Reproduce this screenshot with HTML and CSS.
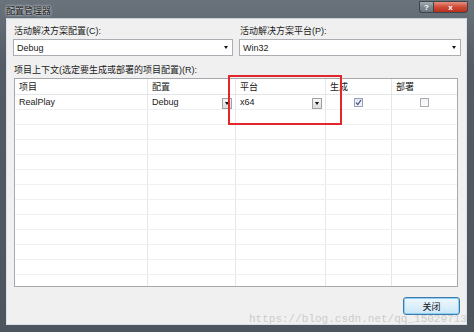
FILE: index.html
```html
<!DOCTYPE html>
<html lang="zh-CN">
<head>
    <meta charset="UTF-8">
    <meta name="viewport" content="width=device-width, initial-scale=1.0">
    <title>配置管理器</title>
    <link rel="stylesheet" href="styles.css">
</head>
<body>
<div class="window">
    <div class="titlebar">
        <span class="title">配置管理器</span>
        <div class="caption-btns">
            <span class="cap-btn help">?</span>
            <span class="cap-btn close">x</span>
        </div>
    </div>

    <div class="client">
        <div class="fields">
            <div class="field">
                <label>活动解决方案配置(C):</label>
                <div class="combo"><span>Debug</span><span class="arrow"></span></div>
            </div>
            <div class="field">
                <label>活动解决方案平台(P):</label>
                <div class="combo"><span>Win32</span><span class="arrow"></span></div>
            </div>
        </div>

        <div class="ctx-label">项目上下文(选定要生成或部署的项目配置)(R):</div>

        <div class="grid">
            <div class="row head">
                <div class="cell">项目</div>
                <div class="cell">配置</div>
                <div class="cell">平台</div>
                <div class="cell">生成</div>
                <div class="cell">部署</div>
            </div>
            <div class="row">
                <div class="cell">RealPlay</div>
                <div class="cell drop">Debug<span class="cell-btn"><span class="arrow"></span></span></div>
                <div class="cell drop">x64<span class="cell-btn"><span class="arrow"></span></span></div>
                <div class="cell center"><span class="check checked">
                    <svg width="7" height="7" viewBox="0 0 7 7"><path d="M1 3.6 L2.8 5.6 L6 1" fill="none" stroke="#3f4f86" stroke-width="1.2"/></svg>
                </span></div>
                <div class="cell center"><span class="check"></span></div>
            </div>
            <div class="row"><div class="cell"></div><div class="cell"></div><div class="cell"></div><div class="cell"></div><div class="cell"></div></div>
            <div class="row"><div class="cell"></div><div class="cell"></div><div class="cell"></div><div class="cell"></div><div class="cell"></div></div>
            <div class="row"><div class="cell"></div><div class="cell"></div><div class="cell"></div><div class="cell"></div><div class="cell"></div></div>
            <div class="row"><div class="cell"></div><div class="cell"></div><div class="cell"></div><div class="cell"></div><div class="cell"></div></div>
            <div class="row"><div class="cell"></div><div class="cell"></div><div class="cell"></div><div class="cell"></div><div class="cell"></div></div>
            <div class="row"><div class="cell"></div><div class="cell"></div><div class="cell"></div><div class="cell"></div><div class="cell"></div></div>
            <div class="row"><div class="cell"></div><div class="cell"></div><div class="cell"></div><div class="cell"></div><div class="cell"></div></div>
            <div class="row"><div class="cell"></div><div class="cell"></div><div class="cell"></div><div class="cell"></div><div class="cell"></div></div>
            <div class="row"><div class="cell"></div><div class="cell"></div><div class="cell"></div><div class="cell"></div><div class="cell"></div></div>
            <div class="row"><div class="cell"></div><div class="cell"></div><div class="cell"></div><div class="cell"></div><div class="cell"></div></div>
            <div class="row"><div class="cell"></div><div class="cell"></div><div class="cell"></div><div class="cell"></div><div class="cell"></div></div>
            <div class="row"><div class="cell"></div><div class="cell"></div><div class="cell"></div><div class="cell"></div><div class="cell"></div></div>
        </div>

        <div class="actions">
            <button class="btn-close">关闭</button>
        </div>
    </div>

    <div class="mark-box"></div>
    <div class="watermark">https://blog.csdn.net/qq_15029713</div>
</div>
</body>
</html>
```

FILE: styles.css
```css
body {
    margin: 0;
    font-family: "Liberation Sans", "Noto Sans CJK SC", sans-serif;
    font-size: 9px;
    color: #1a1a1a;
}
.window {
    position: relative;
    width: 474px;
    height: 332px;
    overflow: hidden;
    background: linear-gradient(#6a737c, #535c65 20%, #4d565f);
    display: flex;
    flex-direction: column;
}
.titlebar {
    height: 18px;
    display: flex;
    justify-content: space-between;
    align-items: flex-start;
}
.title {
    padding: 6px 0 0 6px;
    line-height: 10px;
    color: #111;
    text-shadow: 0 0 3px #dfe3e6, 0 0 2px #dfe3e6;
}
.caption-btns {
    display: flex;
    margin: 1px 6px 0 0;
}
.cap-btn {
    height: 12px;
    line-height: 11px;
    text-align: center;
    color: #fff;
    font-weight: bold;
    font-size: 8px;
    box-sizing: border-box;
    border: 1px solid #3b434b;
}
.cap-btn.help {
    width: 14px;
    background: linear-gradient(#a3abb3, #7e8790 50%, #6c757e);
    border-radius: 0 0 0 3px;
    border-right: none;
}
.cap-btn.close {
    width: 35px;
    background: linear-gradient(#e5907f, #cf4b36 50%, #b8301d);
    border-radius: 0 0 3px 0;
}
.client {
    margin: 0 7px 0 6px;
    height: 307px;
    background: #f0f0f0;
    box-sizing: border-box;
    border: 1px solid #dde1e5;
    border-top-color: #c9ced3;
}
.fields {
    display: grid;
    grid-template-columns: 220px 222px;
    gap: 6px;
    padding: 0 5px 0 6px;
    margin-top: 6px;
}
.field label {
    display: block;
    line-height: 12px;
    padding-left: 1px;
}
.combo {
    margin-top: 2px;
    height: 17px;
    box-sizing: border-box;
    background: #fff;
    border: 1px solid #abadb3;
    display: flex;
    align-items: center;
    justify-content: space-between;
    padding: 0 4px 0 3px;
}
.arrow {
    width: 0;
    height: 0;
    border-left: 2.5px solid transparent;
    border-right: 2.5px solid transparent;
    border-top: 3px solid #111;
}
.ctx-label {
    margin: 8px 0 0 7px;
    line-height: 12px;
}
.grid {
    margin: 2px 0 0 7px;
    width: 444px;
    height: 209px;
    box-sizing: border-box;
    border: 1px solid #a5a9ad;
    background: #fff;
    overflow: hidden;
}
.row {
    display: grid;
    grid-template-columns: 133px 88px 90px 66px 1fr;
    height: 15px;
    box-sizing: border-box;
    border-bottom: 1px solid #eef0f2;
}
.row.head {
    height: 16px;
    border-bottom-color: #e2e4e6;
}
.cell {
    border-right: 1px solid #e6e6e6;
    padding-left: 4px;
    display: flex;
    align-items: center;
    line-height: 12px;
}
.cell:last-child {
    border-right: none;
}
.cell.drop {
    justify-content: space-between;
    padding-right: 3px;
}
.cell.center {
    justify-content: center;
    padding-left: 0;
}
.cell-btn {
    width: 10px;
    height: 11px;
    margin-top: 2px;
    box-sizing: border-box;
    border: 1px solid #9ea3a8;
    background: linear-gradient(#f6f6f6, #dcdcdc);
    display: flex;
    align-items: center;
    justify-content: center;
}
.check {
    width: 9px;
    height: 9px;
    margin-top: 1px;
    box-sizing: border-box;
    border: 1px solid #a9adb2;
    background: linear-gradient(#f1f2f4, #fcfcfc);
    display: flex;
    align-items: center;
    justify-content: center;
}
.check.checked {
    border-color: #98a1b6;
    background: linear-gradient(#e2e6f0, #f4f6fa);
}
.actions {
    display: flex;
    justify-content: flex-end;
    padding: 10px 6px 0 0;
}
.btn-close {
    width: 57px;
    height: 18px;
    font-family: "Liberation Sans", "Noto Sans CJK SC", sans-serif;
    font-size: 9px;
    color: #111;
    border: 1px solid #3d7bad;
    border-radius: 3px;
    background: linear-gradient(#edf7fd, #ddf0fb 50%, #c9e6f8);
    box-shadow: inset 0 0 0 1px #8fd0f0;
    padding: 0;
}
.mark-box {
    position: absolute;
    left: 228px;
    top: 75px;
    width: 114px;
    height: 50px;
    box-sizing: border-box;
    border: 2px solid #e2262c;
}
.watermark {
    position: absolute;
    left: 249px;
    top: 313px;
    font-family: "Liberation Mono", monospace;
    font-size: 11px;
    color: rgba(170, 170, 170, 0.55);
    white-space: nowrap;
}
```
